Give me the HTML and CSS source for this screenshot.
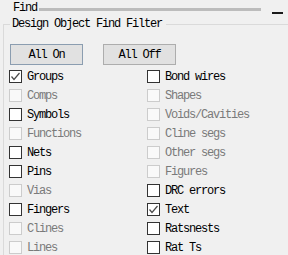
FILE: index.html
```html
<!DOCTYPE html>
<html lang="en">
<head>
  <meta charset="UTF-8">
  <meta name="viewport" content="width=device-width, initial-scale=1.0">
  <title>Find</title>
  <link rel="stylesheet" href="styles.css">
</head>
<body>

  <div class="panel-header">
    <span class="panel-title">Find</span>
    <span class="grip"></span>
    <span class="minimize"></span>
  </div>

  <fieldset class="filter-group">
    <legend>Design Object Find Filter</legend>

    <div class="buttons">
      <button class="focused">All On</button>
      <button>All Off</button>
    </div>

    <div class="columns">
      <ul class="column" id="col-left"></ul>
      <ul class="column" id="col-right"></ul>
    </div>
  </fieldset>

  <script>
    const left = [
      ["Groups", true, true],
      ["Comps", false, false],
      ["Symbols", true, false],
      ["Functions", false, false],
      ["Nets", true, false],
      ["Pins", true, false],
      ["Vias", false, false],
      ["Fingers", true, false],
      ["Clines", false, false],
      ["Lines", false, false]
    ];
    const right = [
      ["Bond wires", true, false],
      ["Shapes", false, false],
      ["Voids/Cavities", false, false],
      ["Cline segs", false, false],
      ["Other segs", false, false],
      ["Figures", false, false],
      ["DRC errors", true, false],
      ["Text", true, true],
      ["Ratsnests", true, false],
      ["Rat Ts", true, false]
    ];

    const tick = '<svg width="11" height="11" viewBox="0 0 11 11"><polyline points="1.5,5.5 4,8.5 9.5,2" fill="none" stroke="#4a4a4a" stroke-width="1.2"/></svg>';

    function renderColumn(id, items) {
      const ul = document.getElementById(id);
      items.forEach(([label, enabled, checked]) => {
        const li = document.createElement("li");
        li.className = enabled ? "option" : "option disabled";
        li.innerHTML = `<span class="box">${checked ? tick : ""}</span><span class="label">${label}</span>`;
        ul.appendChild(li);
      });
    }

    renderColumn("col-left", left);
    renderColumn("col-right", right);
  </script>

</body>
</html>
```

FILE: styles.css
```css
* {
  margin: 0;
  padding: 0;
  box-sizing: border-box;
}

body {
  font-family: "Liberation Mono", "DejaVu Sans Mono", monospace;
  font-size: 12px;
  letter-spacing: -1.2px;
  line-height: 14px;
  background-color: #f0f0f0;
  color: #000;
  overflow: hidden;
  height: 255px;
}

.panel-header {
  display: flex;
  align-items: flex-start;
  height: 17px;
  padding: 1px 0 0 13px;
}

.panel-title {
  width: 26px;
}

.grip {
  flex: 1;
  height: 3px;
  margin-top: 7px;
  background-color: #bcbcbc;
}

.minimize {
  width: 11px;
  height: 2px;
  margin: 11px 5px 0 11px;
  background-color: #1a1a1a;
}

.filter-group {
  width: 320px;
  margin-left: 3px;
  border: 1px solid #dadada;
  padding: 0 0 0 5px;
}

.filter-group legend {
  padding: 0 4px 0 2px;
  margin-left: 1px;
  line-height: 14px;
}

.buttons {
  display: flex;
  gap: 20px;
  margin: 13px 0 2px 1px;
}

.buttons button {
  width: 73px;
  height: 21px;
  font-family: inherit;
  font-size: 12px;
  letter-spacing: -1.2px;
  background-color: #e1e1e1;
  border: 1px solid #adadad;
  color: #000;
}

.buttons button.focused {
  border-color: #8b9db0;
}

.columns {
  display: flex;
}

.column {
  list-style: none;
  width: 138px;
}

.option {
  display: flex;
  align-items: center;
  height: 19px;
  gap: 5px;
}

.box {
  width: 13px;
  height: 13px;
  border: 1px solid #333;
  background-color: #fff;
  display: flex;
  align-items: center;
  justify-content: center;
}

.option.disabled .box {
  border-color: #cccccc;
  background-color: #f9f9f9;
}

.option.disabled .label {
  color: #7a7a7a;
}
```
